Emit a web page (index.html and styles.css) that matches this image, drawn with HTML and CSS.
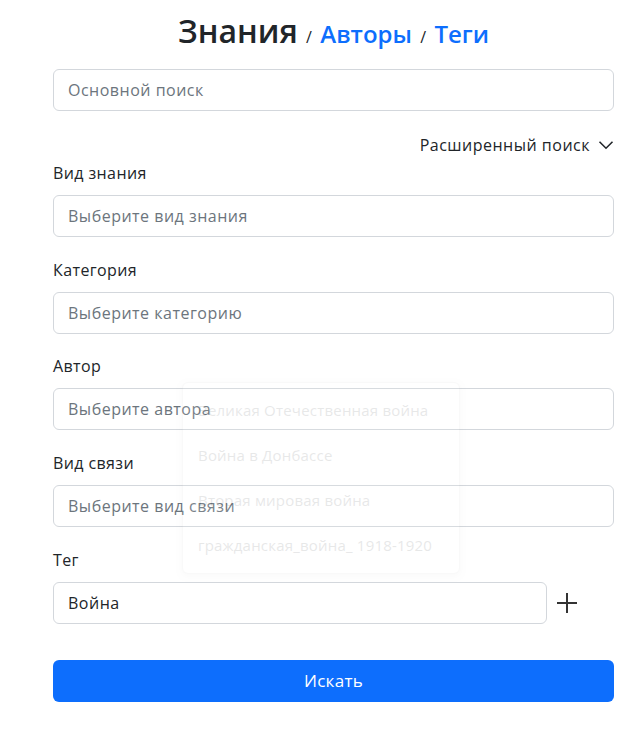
FILE: index.html
```html
<!DOCTYPE html>
<html lang="ru">
<head>
<meta charset="utf-8">
<link rel="stylesheet" href="styles.css">
</head>
<body>
<div class="page">
  <h1 class="title"><span class="main">Знания</span> <span class="sep">/</span> <a class="link" href="#">Авторы</a> <span class="sep">/</span> <a class="link" href="#">Теги</a></h1>
  <input class="field" type="text" placeholder="Основной поиск">
  <div class="adv"><span>Расширенный поиск</span>
    <svg class="chev" width="16" height="16" viewBox="0 0 16 16"><path d="M1.5 4.8 L8 11.2 L14.5 4.8" fill="none" stroke="#212529" stroke-width="1.6"/></svg>
  </div>
  <div class="form">
    <div class="group first">
      <div class="label">Вид знания</div>
      <input class="field" type="text" placeholder="Выберите вид знания">
    </div>
    <div class="group">
      <div class="label">Категория</div>
      <input class="field" type="text" placeholder="Выберите категорию">
    </div>
    <div class="group">
      <div class="label">Автор</div>
      <input class="field" type="text" placeholder="Выберите автора">
    </div>
    <div class="group">
      <div class="label">Вид связи</div>
      <input class="field" type="text" placeholder="Выберите вид связи">
    </div>
    <div class="group">
      <div class="label">Тег</div>
      <div class="tagrow">
        <input class="field tag" type="text" value="Война">
        <svg class="plus" width="22" height="22" viewBox="0 0 22 22"><path d="M11 1 V21 M1 11 H21" stroke="#333" stroke-width="2"/></svg>
      </div>
    </div>
    <div class="dropdown">
      <div class="item">Великая Отечественная война</div>
      <div class="item">Война в Донбассе</div>
      <div class="item">Вторая мировая война</div>
      <div class="item">гражданская_война_ 1918-1920</div>
    </div>
  </div>
  <button class="btn">Искать</button>
</div>
</body>
</html>
```
FILE: styles.css
```css
html, body { margin: 0; padding: 0; background: #fff; }
body {
  font-family: "Open Sans", "Noto Sans", sans-serif;
  color: #212529;
  font-size: 16px;
}
.page {
  width: 561px;
  margin-left: 53px;
  padding-top: 11px;
}
.title {
  margin: 0 0 15px 0;
  height: 43px;
  text-align: center;
  line-height: 40px;
  font-weight: 600;
}
.main { font-size: 32px; color: #212529; }
.sep { font-size: 16px; color: #212529; font-weight: 500; }
.link { font-size: 24px; color: #0d6efd; text-decoration: none; }
.field {
  display: block;
  box-sizing: border-box;
  width: 100%;
  height: 42px;
  padding: 8px 14px;
  font-family: inherit;
  font-size: 16px;
  letter-spacing: 0.5px;
  line-height: 24px;
  color: #212529;
  background: #fff;
  border: 1px solid #d3d7dc;
  border-radius: 6px;
  outline: none;
}
.field::placeholder { color: #6c757d; opacity: 1; }
.adv {
  margin-top: 22px;
  display: flex;
  justify-content: flex-end;
  align-items: center;
  gap: 8px;
  line-height: 24px;
  letter-spacing: 0.5px;
}
.chev { display: block; }
.form { position: relative; margin-top: 4px; }
.group { margin-top: 20.7px; }
.group.first { margin-top: 0; }
.label { line-height: 24px; margin-bottom: 10px; letter-spacing: 0.4px; }
.tagrow { display: flex; align-items: center; }
.field.tag { width: 494px; }
.plus { margin-left: 9px; }
.dropdown {
  position: absolute;
  left: 129px;
  top: 221px;
  width: 278px;
  height: 192px;
  box-sizing: border-box;
  padding-top: 5px;
  background: #fff;
  border: 1px solid rgba(0,0,0,0.2);
  border-radius: 6px;
  box-shadow: 0 2px 6px rgba(0,0,0,0.2);
  opacity: 0.1;
}
.item {
  padding: 0 15px;
  height: 45px;
  line-height: 45px;
  font-size: 15px;
  letter-spacing: 0.2px;
  color: #212529;
  white-space: nowrap;
}
.btn {
  display: block;
  margin-top: 36px;
  width: 100%;
  height: 42px;
  border: none;
  border-radius: 6px;
  background: #0d6efd;
  color: #fff;
  font-family: inherit;
  font-size: 17px;
  letter-spacing: 0.3px;
}
```
